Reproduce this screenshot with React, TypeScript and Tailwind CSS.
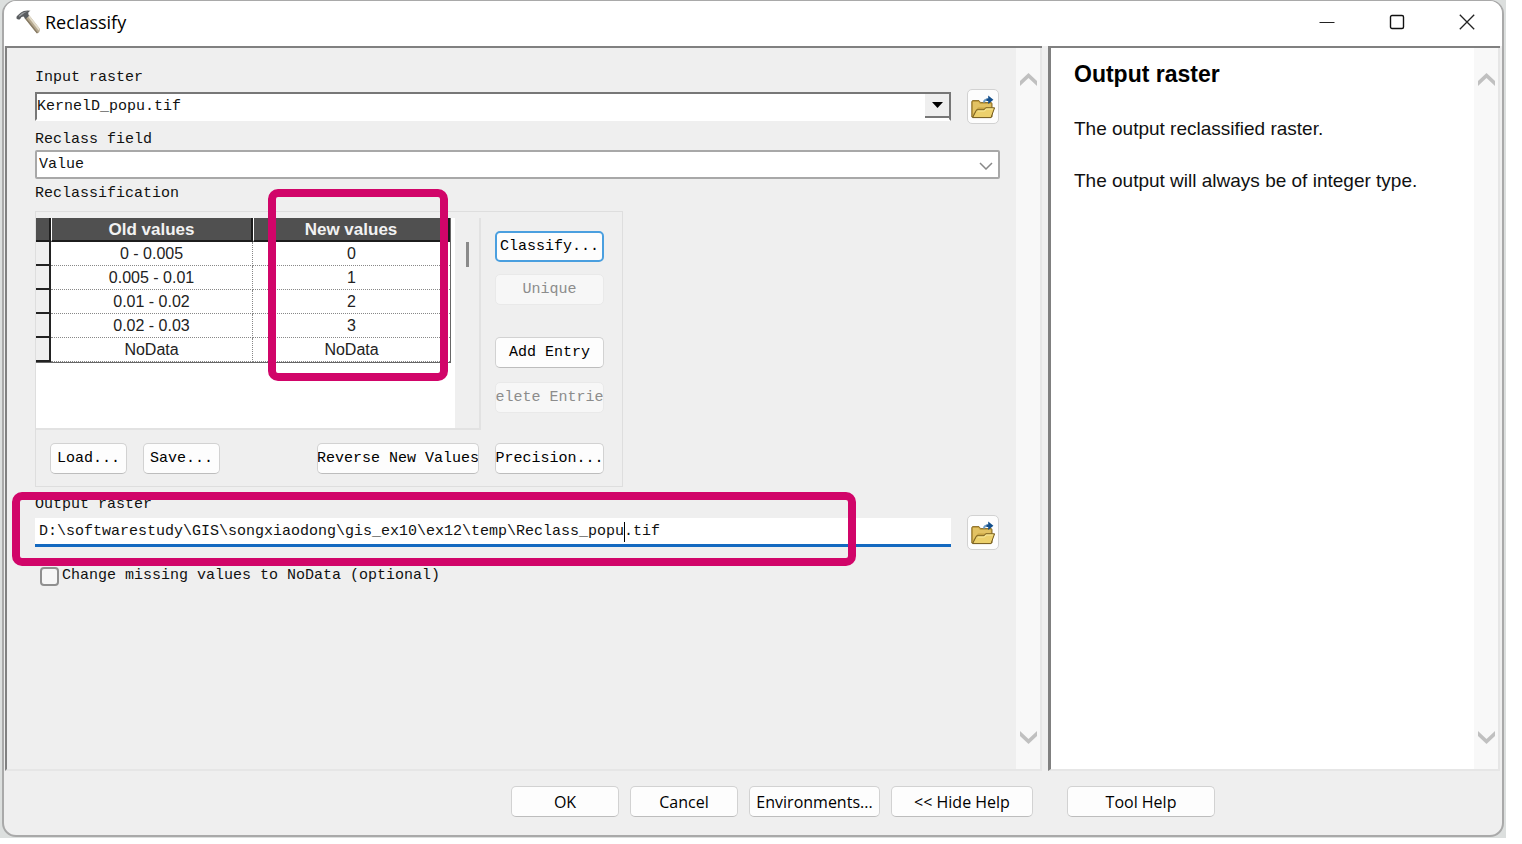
import React, { useState } from "react";
import { clsx } from "clsx";

const MONO = "font-['Liberation_Mono',monospace]";
const ARIAL = "font-['Liberation_Sans',Arial,sans-serif]";
const UI = "font-['Open_Sans',sans-serif]";

const rows = [
  { oldValue: "0 - 0.005", newValue: "0" },
  { oldValue: "0.005 - 0.01", newValue: "1" },
  { oldValue: "0.01 - 0.02", newValue: "2" },
  { oldValue: "0.02 - 0.03", newValue: "3" },
  { oldValue: "NoData", newValue: "NoData" },
];

interface DialogButtonProps extends React.ButtonHTMLAttributes<HTMLButtonElement> {
  focused?: boolean;
}

const DialogButton: React.FC<DialogButtonProps> = ({
  focused,
  className,
  children,
  ...props
}) => (
  <button
    type="button"
    className={clsx(
      "flex h-[31px] items-center justify-center overflow-hidden rounded-[5px] whitespace-nowrap",
      focused
        ? "border-2 border-[#4a9fdf] bg-[#fdfdfd] text-black"
        : "border border-[#d2d2d2] border-b-[#bdbdbd] bg-[#fdfdfd] text-black",
      "disabled:border-[#e9e9e9] disabled:bg-[#f7f7f7] disabled:text-[#8c8c8c]",
      className
    )}
    {...props}
  >
    <span className="shrink-0">{children}</span>
  </button>
);

const HammerIcon = () => (
  <svg className="h-6 w-6" viewBox="0 0 24 24" aria-hidden="true">
    <path d="M8.5 8 L13 5 L23.6 18.5 Q24.4 22.5 21 23.4 Z" fill="#b5a88f" />
    <path d="M11.5 6 L13 5 L23.6 18.5 L22.6 20.6 Z" fill="#e3dccb" />
    <path d="M8.5 8 L9.8 7.2 L22 22.8 L20.6 23.2 Z" fill="#867a64" />
    <path
      d="M0.5 8.5 Q0 6.5 1.5 5.5 L5 2.5 Q8 0 14.5 0.8 Q11.5 2 12.5 4.5 L13 6 L9.5 9 L7.5 6.5 L5.5 7 L4 9.2 Q2 10 0.5 8.5 Z"
      fill="#5a5d60"
    />
    <path d="M2.5 6 L6 3 Q9 1.2 11.5 1.4 Q8.5 2.4 6.5 4.4 L3.6 6.8 Z" fill="#9a9da0" />
  </svg>
);

const FolderIcon = () => (
  <svg className="h-6 w-6" viewBox="0 0 24 24" aria-hidden="true">
    <path
      d="M0.8 22 V7 Q0.8 5.6 2 5.6 H8 L9.5 7.6 H20 Q21 7.6 21 8.8 V22 Z"
      fill="#c9a544"
      stroke="#8a6d26"
      strokeWidth="1"
    />
    <path d="M2 19 V7 H7.4 L9 9 H19.8 V12.4 H7 Z" fill="#e2c263" />
    <path
      d="M1.6 22.6 L5.6 14.8 H13 L14.6 12.8 H23.6 L20 22.6 Z"
      fill="#ecd06c"
      stroke="#735a1c"
      strokeWidth="1"
      strokeLinejoin="round"
    />
    <path d="M6.8 16 H13.6 L15.2 14 H22" fill="none" stroke="#f8ea9e" strokeWidth="1" />
    <path d="M13 7.5 Q13 4.6 17 4.6" fill="none" stroke="#6f9cc4" strokeWidth="2" />
    <path d="M15.5 3.6 H17.2 V0.6 L22.4 4.8 L17.2 9 V6 H15.5 Z" fill="#144f8c" />
  </svg>
);

const BrowseButton = ({ label }: { label: string }) => (
  <button
    type="button"
    aria-label={label}
    className="flex h-[35px] w-8 shrink-0 items-center justify-center rounded-[5px] border border-[#d2d2d2] bg-[#fdfdfd]"
  >
    <FolderIcon />
  </button>
);

const ScrollArrow = ({ down }: { down?: boolean }) => (
  <svg className="h-[13px] w-[17px]" viewBox="0 0 17 13" aria-hidden="true">
    <path
      d={down ? "M0 0 L8.5 8 L17 0 V5 L8.5 13 L0 5 Z" : "M0 13 L8.5 5 L17 13 V8 L8.5 0 L0 8 Z"}
      fill="#c0c0c0"
    />
  </svg>
);

const ScrollBar = () => (
  <div className="flex w-[26px] shrink-0 flex-col items-center justify-between border-r-2 border-[#e6e6e6] bg-[#f8f8f8] py-[25px]">
    <ScrollArrow />
    <ScrollArrow down />
  </div>
);

const TitleBar = () => (
  <header className="flex h-[45px] shrink-0 items-center bg-white pb-1 pl-3">
    <HammerIcon />
    <h1 className={clsx(UI, "ml-[5px] flex-1 text-lg text-black")}>Reclassify</h1>
    <button type="button" aria-label="Minimize" className="flex h-full w-[70px] items-center justify-center">
      <svg className="h-4 w-4" viewBox="0 0 16 16">
        <path d="M0.5 8.5 H15.5" stroke="#222" strokeWidth="1" />
      </svg>
    </button>
    <button type="button" aria-label="Maximize" className="flex h-full w-[70px] items-center justify-center">
      <svg className="h-4 w-4" viewBox="0 0 16 16">
        <rect x="1.5" y="1.5" width="13" height="13" rx="1.5" fill="none" stroke="#111" strokeWidth="1.4" />
      </svg>
    </button>
    <button type="button" aria-label="Close" className="flex h-full w-[70px] items-center justify-center">
      <svg className="h-4 w-4" viewBox="0 0 16 16">
        <path d="M0.8 0.8 L15.2 15.2 M15.2 0.8 L0.8 15.2" stroke="#222" strokeWidth="1.3" />
      </svg>
    </button>
  </header>
);

const ReclassTable = () => (
  <div className="relative flex h-[212px] border-r-2 border-b-2 border-[#e2e2e2] bg-white">
    <div className="flex-1">
      <table
        className={clsx(
          ARIAL,
          "w-[415px] table-fixed border-separate border-spacing-0 border-r border-b border-[#666] text-center text-base leading-[22px] text-[#222]"
        )}
      >
        <colgroup>
          <col className="w-[15px]" />
          <col className="w-[202px]" />
          <col />
        </colgroup>
        <thead>
          <tr className="h-6 bg-[#505050] text-[17px] leading-5 text-[#f2f2f2]">
            <th className="border-r-2 border-b-2 border-[#1c1c1c] p-0" />
            <th className="border-r-2 border-b-2 border-l border-[#1c1c1c] border-l-white p-0 pt-[2px]">Old values</th>
            <th className="border-r-2 border-b-2 border-l border-[#1c1c1c] border-l-white p-0 pt-[2px]">New values</th>
          </tr>
        </thead>
        <tbody>
          {rows.map((row) => (
            <tr key={row.oldValue} className="h-6">
              <td className="border-r-2 border-b-2 border-[#222] bg-[#efefef] p-0" />
              <td className="border-r border-b border-dotted border-[#888] p-0">{row.oldValue}</td>
              <td className="border-b border-dotted border-[#888] p-0">{row.newValue}</td>
            </tr>
          ))}
        </tbody>
      </table>
    </div>
    <div className="flex w-6 justify-center bg-[#efefef] pt-6">
      <div className="h-[25px] w-[3px] bg-[#8a8a8a]" />
    </div>
    <div className="pointer-events-none absolute -top-[29px] left-[232px] h-48 w-[180px] rounded-[10px] border-8 border-[#d10569]" />
  </div>
);

const Reclassification = () => (
  <div className="mt-[7px] flex w-[588px] border border-[#dedede]">
    <div className="w-[445px] pt-[6px] pb-3">
      <ReclassTable />
      <div className="mt-[13px] flex pr-[2px] pl-[14px]">
        <DialogButton className="w-[77px]">Load...</DialogButton>
        <DialogButton className="ml-4 w-[77px]">Save...</DialogButton>
        <DialogButton className="ml-auto w-[162px]">Reverse New Values</DialogButton>
      </div>
    </div>
    <div className="ml-[14px] flex w-[109px] flex-col pt-[19px]">
      <DialogButton focused>Classify...</DialogButton>
      <DialogButton className="mt-3" disabled>
        Unique
      </DialogButton>
      <DialogButton className="mt-8">Add Entry</DialogButton>
      <DialogButton className="mt-[14px]" disabled>
        Delete Entries
      </DialogButton>
      <DialogButton className="mt-[30px]">Precision...</DialogButton>
    </div>
  </div>
);

const ParameterPane = () => {
  const [output, setOutput] = useState(
    "D:\\softwarestudy\\GIS\\songxiaodong\\gis_ex10\\ex12\\temp\\Reclass_popu.tif"
  );
  const [changeMissing, setChangeMissing] = useState(false);

  return (
    <section className="flex min-w-0 flex-1 border-t-2 border-b-2 border-l-2 border-[#808080] border-b-[#e6e6e6]">
      <form
        className={clsx(MONO, "min-w-0 flex-1 pt-5 pr-4 pl-7 text-[15px] leading-5 text-[#111]")}
        onSubmit={(e) => e.preventDefault()}
      >
        <label htmlFor="input-raster" className="block">
          Input raster
        </label>
        <div className="mt-px flex items-center gap-4 pr-px">
          <div className="relative flex-1">
            <select
              id="input-raster"
              className="block h-[29px] w-full appearance-none border-2 border-[#777] border-b-white bg-white"
            >
              <option>KernelD_popu.tif</option>
            </select>
            <span className="pointer-events-none absolute top-[2px] right-[2px] flex h-6 w-6 items-center justify-center border-b-2 border-[#777] bg-[#efefef]">
              <svg className="h-[6px] w-[11px]" viewBox="0 0 11 6" aria-hidden="true">
                <path d="M0 0 H11 L5.5 6 Z" fill="#000" />
              </svg>
            </span>
          </div>
          <BrowseButton label="Browse input raster" />
        </div>

        <label htmlFor="reclass-field" className="mt-[6px] block">
          Reclass field
        </label>
        <div className="relative">
          <select
            id="reclass-field"
            className="block h-[29px] w-full appearance-none rounded-[2px] border-2 border-[#a8a8a8] bg-white pl-[2px]"
          >
            <option>Value</option>
          </select>
          <svg
            className="pointer-events-none absolute top-3 right-[7px] h-2 w-[14px]"
            viewBox="0 0 14 8"
            aria-hidden="true"
          >
            <path d="M1 1 L7 7 L13 1" fill="none" stroke="#888" strokeWidth="1.5" />
          </svg>
        </div>

        <p className="mt-[5px]">Reclassification</p>
        <Reclassification />

        <div className="relative mt-2">
          <label htmlFor="output-raster" className="block">
            Output raster
          </label>
          <div className="flex items-center gap-4 pr-px">
            <div className="relative flex-1">
              <input
                id="output-raster"
                type="text"
                value={output}
                onChange={(e) => setOutput(e.target.value)}
                className="block h-[29px] w-full border-b-[3px] border-[#1469c0] bg-white pl-1 outline-none"
              />
              <span className="absolute top-1 left-[589px] h-5 w-px bg-black" />
            </div>
            <BrowseButton label="Browse output raster" />
          </div>
          <div className="pointer-events-none absolute -top-[3px] -left-[23px] h-[74px] w-[844px] rounded-[10px] border-8 border-[#d10569]" />
        </div>

        <div className="mt-4 flex items-center pl-[5px]">
          <input
            id="change-missing"
            type="checkbox"
            checked={changeMissing}
            onChange={(e) => setChangeMissing(e.target.checked)}
            className="h-[19px] w-[19px] appearance-none rounded-[4px] border-2 border-[#8f8f8f] bg-[#f6f6f6] checked:bg-[#1469c0]"
          />
          <label htmlFor="change-missing" className="pl-[3px]">
            Change missing values to NoData (optional)
          </label>
        </div>
      </form>
      <ScrollBar />
    </section>
  );
};

const HelpPane = () => (
  <aside className="flex w-[452px] shrink-0 border-t-2 border-b-2 border-l-[3px] border-[#808080] border-b-[#e6e6e6] bg-white">
    <div className={clsx(ARIAL, "flex-1 pt-3 pl-[23px] text-[19px] leading-[26px] text-[#111]")}>
      <h2 className="text-[23px] leading-7 font-bold text-black">Output raster</h2>
      <p className="mt-7">The output reclassified raster.</p>
      <p className="mt-[26px]">The output will always be of integer type.</p>
    </div>
    <ScrollBar />
  </aside>
);

const Footer = () => (
  <footer className={clsx(UI, "flex h-16 shrink-0 items-start pt-[15px] text-base text-[#222]")}>
    <div className="flex flex-1 justify-end gap-[11px] pr-[15px]">
      <DialogButton className="w-[108px]">OK</DialogButton>
      <DialogButton className="w-[108px]">Cancel</DialogButton>
      <DialogButton className="w-[131px]">Environments...</DialogButton>
      <DialogButton className="w-[142px]">&lt;&lt; Hide Help</DialogButton>
    </div>
    <div className="w-[454px] pl-[19px]">
      <DialogButton className="w-[148px]">Tool Help</DialogButton>
    </div>
  </footer>
);

export default function App() {
  return (
    <div className="h-screen bg-white pr-4 pb-[6px]">
      <div className="h-full bg-[#dcdfde] px-[2px] pb-px">
        <main className="flex h-full flex-col overflow-hidden rounded-[14px] border-x-2 border-t border-b-2 border-[#a9a9a9] bg-[#efefef]">
          <TitleBar />
          <div className="flex min-h-0 flex-1 gap-[6px] pr-[2px] pl-px">
            <ParameterPane />
            <HelpPane />
          </div>
          <Footer />
        </main>
      </div>
    </div>
  );
}
